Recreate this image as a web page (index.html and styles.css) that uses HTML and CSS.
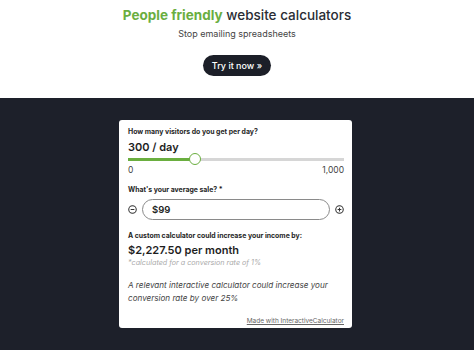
FILE: index.html
```html
<!DOCTYPE html>
<html lang="en">
<head>
    <meta charset="UTF-8">
    <meta name="viewport" content="width=device-width, initial-scale=1.0">
    <title>Website Calculators</title>
    <link rel="stylesheet" href="styles.css">
</head>
<body>

    <header class="hero">
        <h1 class="title"><span class="green">People friendly</span> website calculators</h1>
        <p class="subtitle">Stop emailing spreadsheets</p>
        <a class="btn-try" href="#">Try it now &raquo;</a>
    </header>

    <section class="dark">
        <div class="card">
            <div class="label">How many visitors do you get per day?</div>
            <div class="big">300 / day</div>
            <div class="slider">
                <div class="track"><div class="fill" style="width: 31%"></div></div>
                <div class="thumb" style="left: 31%"></div>
            </div>
            <div class="range">
                <span>0</span>
                <span>1,000</span>
            </div>

            <div class="label label-sale">What's your average sale? *</div>
            <div class="input-row">
                <svg class="step" viewBox="0 0 12 12" width="9" height="9">
                    <circle cx="6" cy="6" r="5" fill="none" stroke="#333" stroke-width="1.4"/>
                    <path d="M3.5 6h5" stroke="#333" stroke-width="1.4"/>
                </svg>
                <div class="input">$99</div>
                <svg class="step" viewBox="0 0 12 12" width="9" height="9">
                    <circle cx="6" cy="6" r="5" fill="none" stroke="#333" stroke-width="1.4"/>
                    <path d="M3.5 6h5M6 3.5v5" stroke="#333" stroke-width="1.4"/>
                </svg>
            </div>

            <div class="label label-result">A custom calculator could increase your income by:</div>
            <div class="big big-result">$2,227.50 per month</div>
            <div class="note">*calculated for a conversion rate of 1%</div>

            <p class="claim">A relevant interactive calculator could increase your conversion rate by over 25%</p>

            <a class="made" href="#">Made with InteractiveCalculator</a>
        </div>
    </section>

</body>
</html>
```

FILE: styles.css
```css
body {
    margin: 0;
    font-family: Inter, "Open Sans", sans-serif;
    color: #222;
    background: #fff;
}

.hero {
    height: 98px;
    display: flex;
    flex-direction: column;
    align-items: center;
    padding-top: 6px;
    box-sizing: border-box;
}

.title {
    margin: 0;
    font-size: 13.5px;
    line-height: 18px;
    font-weight: 500;
    color: #2a2d34;
}

.green {
    color: #6aae3f;
    font-weight: 700;
}

.subtitle {
    margin: 4px 0 0;
    font-size: 9px;
    line-height: 12px;
    color: #444;
}

.btn-try {
    margin-top: 15px;
    padding: 4px 9px;
    font-size: 9px;
    line-height: 13px;
    font-weight: 500;
    color: #fff;
    background: #1c1f28;
    border-radius: 11px;
    text-decoration: none;
}

.dark {
    background: #1d202a;
    height: 252px;
    padding-top: 22px;
    box-sizing: border-box;
}

.card {
    width: 233px;
    height: 208px;
    margin-left: 119px;
    background: #fff;
    border-radius: 3px;
    padding: 6px 8px 0 9px;
    box-sizing: border-box;
    display: flex;
    flex-direction: column;
}

.label {
    font-size: 6.9px;
    font-weight: 700;
    color: #1e1e1e;
    line-height: 12px;
}

.big {
    font-size: 11px;
    font-weight: 600;
    color: #1e1e1e;
    line-height: 14px;
    margin-top: 2px;
}

.slider {
    position: relative;
    height: 12px;
    margin-top: -1px;
}

.track {
    position: absolute;
    left: 0;
    right: 0;
    top: 5px;
    height: 3px;
    background: #d6d6d6;
}

.fill {
    height: 100%;
    background: #6aae3f;
}

.thumb {
    position: absolute;
    top: 0;
    width: 12px;
    height: 12px;
    margin-left: -6px;
    border: 1.5px solid #6aae3f;
    border-radius: 50%;
    background: #fff;
    box-sizing: border-box;
}

.range {
    display: flex;
    justify-content: space-between;
    font-size: 8.5px;
    color: #444;
    line-height: 10px;
    margin-top: 0;
}

.label-sale {
    margin-top: 9px;
}

.input-row {
    display: flex;
    align-items: center;
    gap: 5px;
    margin-top: 3px;
}

.step {
    flex: none;
}

.input {
    flex: 1;
    height: 21px;
    border: 1px solid #8a8a8a;
    border-radius: 11px;
    box-sizing: border-box;
    padding-left: 9px;
    font-size: 9.5px;
    font-weight: 600;
    line-height: 19px;
}

.label-result {
    margin-top: 10px;
}

.big-result {
    margin-top: 1px;
}

.note {
    font-size: 7.2px;
    font-style: italic;
    color: #aaa;
    line-height: 10px;
    margin-top: 1px;
}

.claim {
    margin: 11px 0 0;
    font-size: 8.1px;
    font-style: italic;
    color: #444;
    line-height: 13px;
}

.made {
    margin-top: auto;
    margin-bottom: 3px;
    align-self: flex-end;
    font-size: 6.5px;
    color: #666;
}
```
